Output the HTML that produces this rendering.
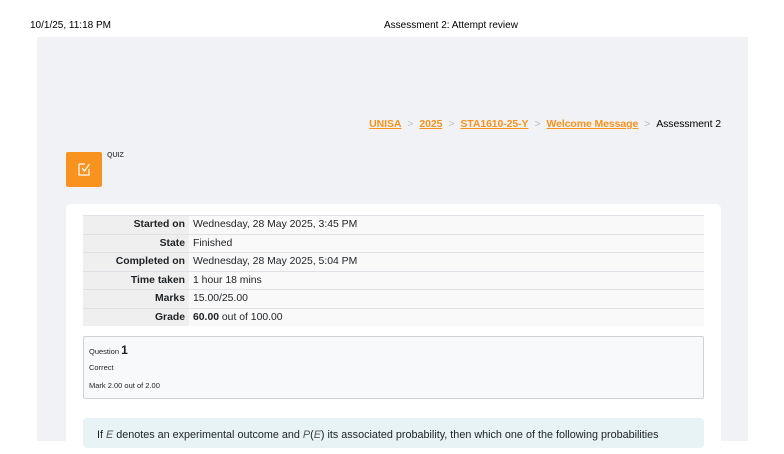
<!DOCTYPE html>
<html><head><style>
body{margin:0;width:784px;height:441px;background:#fff;font-family:"Liberation Sans",sans-serif;overflow:hidden;position:relative;color:#1d2125}
.hdr{position:absolute;top:20px;font-size:10px;color:#000}
.gray{position:absolute;left:37px;top:37px;width:711px;height:404px;background:#f1f2f5}
.bc{position:absolute;right:63px;top:118px;font-size:10.5px;letter-spacing:-0.1px}
.bc a{color:#f7931e;text-decoration:underline;font-weight:bold}
.bc .s{color:#bbb;margin:0 6px}
.icon{position:absolute;left:66px;top:152px;width:36px;height:35px;background:#f7931e;border-radius:2px}
.quiz{position:absolute;left:107px;top:152px;font-size:7px;color:#555;font-weight:bold}
.card{position:absolute;left:66px;top:204px;width:655px;height:250px;background:#fff;border-radius:5px}
table{position:absolute;left:83px;top:215px;width:621px;border-collapse:collapse;font-size:10.4px}
td{height:17.5px;padding:0 4px;border-top:1px solid #dee2e6;background:#f9f9f9}
td.l{width:98px;text-align:right;background:#efefef;font-weight:bold}
.q{position:absolute;left:83px;top:336px;width:619px;height:61px;border:1px solid #cfd3d8;background:#f8f9fa;border-radius:2px;font-size:7.5px}
.info{position:absolute;left:83px;top:418px;width:621px;height:30px;background:#e7f3f5;border-radius:4px;font-size:10.8px}
</style></head><body>
<div class="hdr" style="left:30px">10/1/25, 11:18 PM</div>
<div class="hdr" style="left:384px">Assessment 2: Attempt review</div>
<div class="gray"></div>
<div class="bc"><a>UNISA</a><span class="s">&gt;</span><a>2025</a><span class="s">&gt;</span><a>STA1610-25-Y</a><span class="s">&gt;</span><a>Welcome Message</a><span class="s">&gt;</span><span style="color:#000">Assessment 2</span></div>
<div class="icon"><svg width="36" height="35"><path d="M13 12h6M13 12v11h10v-6" stroke="#fff" fill="none" stroke-width="1.2"/><path d="M16 16l2.5 3 5-7" stroke="#fff" fill="none" stroke-width="1.2"/></svg></div>
<div class="quiz">QUIZ</div>
<div class="card"></div>
<table>
<tr><td class="l">Started on</td><td>Wednesday, 28 May 2025, 3:45 PM</td></tr>
<tr><td class="l">State</td><td>Finished</td></tr>
<tr><td class="l">Completed on</td><td>Wednesday, 28 May 2025, 5:04 PM</td></tr>
<tr><td class="l">Time taken</td><td>1 hour 18 mins</td></tr>
<tr><td class="l">Marks</td><td>15.00/25.00</td></tr>
<tr><td class="l">Grade</td><td><b>60.00</b> out of 100.00</td></tr>
</table>
<div class="q">
<div style="position:absolute;left:5px;top:6px">Question <span style="font-size:12px;font-weight:bold">1</span></div>
<div style="position:absolute;left:5px;top:26px">Correct</div>
<div style="position:absolute;left:5px;top:44px">Mark 2.00 out of 2.00</div>
</div>
<div class="info"><div style="position:absolute;left:14px;top:11px">If <i style="color:#555">E</i> denotes an experimental outcome and <i style="color:#555">P</i>(<i style="color:#555">E</i>) its associated probability, then which one of the following probabilities</div></div>
</body></html>
